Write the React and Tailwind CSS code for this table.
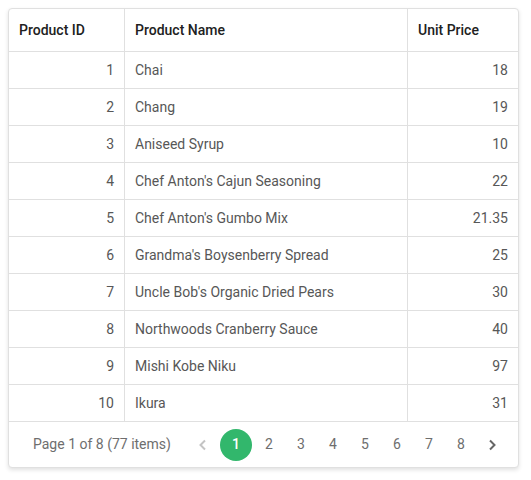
import React from "react";

const rows = [
  [1, "Chai", "18"],
  [2, "Chang", "19"],
  [3, "Aniseed Syrup", "10"],
  [4, "Chef Anton's Cajun Seasoning", "22"],
  [5, "Chef Anton's Gumbo Mix", "21.35"],
  [6, "Grandma's Boysenberry Spread", "25"],
  [7, "Uncle Bob's Organic Dried Pears", "30"],
  [8, "Northwoods Cranberry Sauce", "40"],
  [9, "Mishi Kobe Niku", "97"],
  [10, "Ikura", "31"],
];

function Chevron({ dir, color }) {
  return (
    <svg width="16" height="16" viewBox="0 0 16 16" fill="none">
      <path
        d={dir === "left" ? "M10 3.5 L5.5 8 L10 12.5" : "M6 3.5 L10.5 8 L6 12.5"}
        stroke={color}
        strokeWidth="2"
      />
    </svg>
  );
}

export default function App() {
  return (
    <div className="p-2 bg-white" style={{ fontFamily: "Roboto, 'Liberation Sans', sans-serif" }}>
      <div className="w-[511px] border border-[#e0e0e0] rounded-[4px] shadow-[0_2px_4px_rgba(0,0,0,0.12)] bg-white overflow-hidden">
        <div className="grid grid-cols-[116px_283px_1fr] h-[43px] border-b border-[#e0e0e0] text-[14px] font-medium text-[#212121]">
          <div className="flex items-center px-[10px] border-r border-[#e0e0e0]">Product ID</div>
          <div className="flex items-center px-[10px] border-r border-[#e0e0e0]">Product Name</div>
          <div className="flex items-center px-[10px]">Unit Price</div>
        </div>
        {rows.map(([id, name, price]) => (
          <div
            key={id}
            className="grid grid-cols-[116px_283px_1fr] h-[37px] border-b border-[#e0e0e0] text-[14px] text-[#575757]"
          >
            <div className="flex items-center justify-end px-[10px] border-r border-[#e0e0e0]">{id}</div>
            <div className="flex items-center px-[10px] border-r border-[#e0e0e0]">{name}</div>
            <div className="flex items-center justify-end px-[10px]">{price}</div>
          </div>
        ))}
        <div className="flex items-center h-[45px] pl-[24px] text-[14px] text-[#6e6e6e]">
          <span className="w-[160px]">Page 1 of 8 (77 items)</span>
          <div className="flex items-center">
            <div className="w-[20px] flex justify-center">
              <Chevron dir="left" color="#c4c4c4" />
            </div>
            <div className="ml-[7px] mr-[1px] w-[32px] h-[32px] rounded-full bg-[#32b76c] text-white flex items-center justify-center font-medium">1</div>
            {[2, 3, 4, 5, 6, 7, 8].map((n) => (
              <div key={n} className="w-[32px] h-[32px] flex items-center justify-center">{n}</div>
            ))}
            <div className="w-[30px] flex justify-center">
              <Chevron dir="right" color="#666666" />
            </div>
          </div>
        </div>
      </div>
    </div>
  );
}
